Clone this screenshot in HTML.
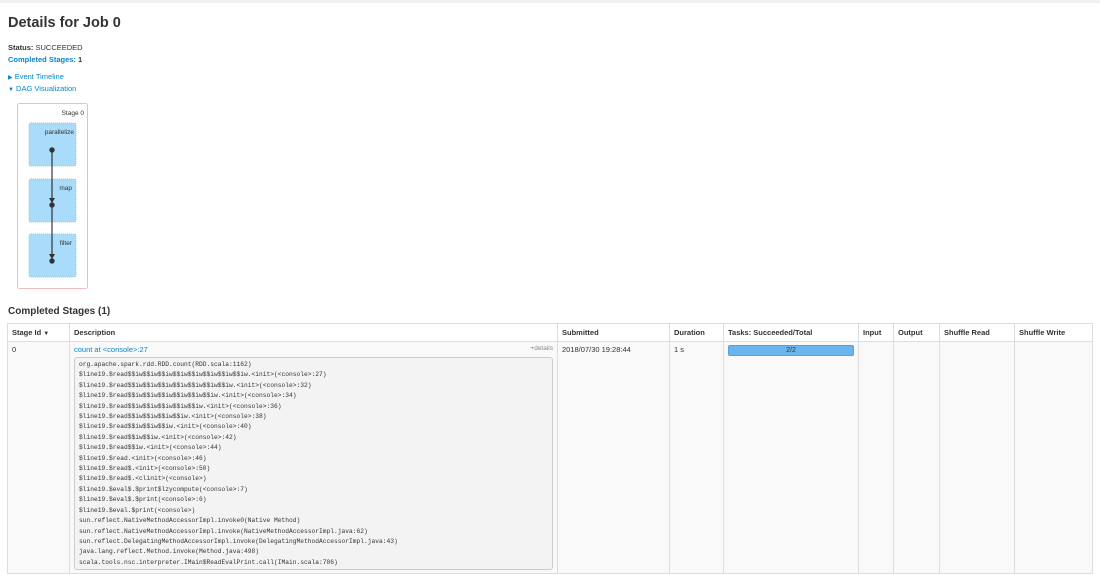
<!DOCTYPE html>
<html><head><style>
*{margin:0;padding:0;box-sizing:border-box}
body{width:1100px;height:575px;background:#fff;font-family:"Liberation Sans",sans-serif;color:#333;position:relative;overflow:hidden}
.a{position:absolute;white-space:nowrap}
a,.lk{color:#0088cc;text-decoration:none}
table{position:absolute;left:7px;top:323px;border-collapse:collapse;font-size:7.5px;width:1086px;table-layout:fixed}
td,th{border:1px solid #ddd;text-align:left;vertical-align:top;padding:3px 4px}
th{height:17px;font-weight:bold;background:#fff;padding:4px}
tr.r td{background:#f9f9f9;height:231px}
pre{font-family:"Liberation Mono",monospace;font-size:6.26px;line-height:10.4px;color:#333;background:#f3f3f3;border:1px solid #ccc;border-radius:3px;padding:2px 4px 0;margin-top:3px;height:213px;overflow:hidden}
</style></head><body>
<div class="a" style="left:0;top:0;width:1100px;height:3px;background:#f0f0f0"></div>
<div class="a" style="left:8px;top:15px;font-size:14.5px;font-weight:bold;color:#333">Details for Job 0</div>
<div class="a" style="left:8px;top:43px;font-size:7.5px"><b>Status:</b> SUCCEEDED</div>
<div class="a lk" style="left:8px;top:55px;font-size:7.5px"><b>Completed Stages:</b> <span style="color:#333"><b>1</b></span></div>
<div class="a lk" style="left:8px;top:72px;font-size:7.5px"><span style="font-size:6px">&#9654;</span> Event Timeline</div>
<div class="a lk" style="left:8px;top:84px;font-size:7.5px"><span style="font-size:6px">&#9660;</span> DAG Visualization</div>
<svg class="a" style="left:0;top:0" width="100" height="300">
<rect x="17.5" y="103.5" width="70" height="185" fill="#fff" stroke="#f0bcc0" rx="2"/>
<text x="84" y="115" font-size="6.5" text-anchor="end" font-family="Liberation Sans" fill="#333">Stage 0</text>
<rect x="29" y="123" width="47" height="43" fill="#a8dcfa" stroke="#9cc" stroke-dasharray="1,1" rx="2"/>
<rect x="29" y="179" width="47" height="43" fill="#a8dcfa" stroke="#9cc" stroke-dasharray="1,1" rx="2"/>
<rect x="29" y="234" width="47" height="43" fill="#a8dcfa" stroke="#9cc" stroke-dasharray="1,1" rx="2"/>
<g font-size="6.5" font-family="Liberation Sans" fill="#333" text-anchor="end"><text x="74" y="134">parallelize</text><text x="72" y="190">map</text><text x="72" y="245">filter</text></g>
<line x1="52" y1="150" x2="52" y2="261" stroke="#333" stroke-width="1.2"/>
<circle cx="52" cy="150" r="2.7" fill="#333"/><circle cx="52" cy="205" r="2.7" fill="#333"/><circle cx="52" cy="261" r="2.7" fill="#333"/>
<path d="M49 198L55 198L52 203Z M49 254L55 254L52 259Z" fill="#333"/>
</svg>
<div class="a" style="left:8px;top:306px;font-size:10px;font-weight:bold">Completed Stages (1)</div>
<table>
<colgroup><col style="width:62px"><col style="width:488px"><col style="width:112px"><col style="width:54px"><col style="width:135px"><col style="width:35px"><col style="width:46px"><col style="width:75px"><col></colgroup>
<tr><th>Stage Id <span style="font-size:6px">&#9660;</span></th><th>Description</th><th>Submitted</th><th>Duration</th><th>Tasks: Succeeded/Total</th><th>Input</th><th>Output</th><th>Shuffle Read</th><th>Shuffle Write</th></tr>
<tr class="r"><td>0</td><td><span class="lk">count at &lt;console&gt;:27</span><span style="float:right;color:#888;font-size:6.5px">+details</span>
<pre>org.apache.spark.rdd.RDD.count(RDD.scala:1162)
$line19.$read$$iw$$iw$$iw$$iw$$iw$$iw$$iw$$iw.&lt;init&gt;(&lt;console&gt;:27)
$line19.$read$$iw$$iw$$iw$$iw$$iw$$iw$$iw.&lt;init&gt;(&lt;console&gt;:32)
$line19.$read$$iw$$iw$$iw$$iw$$iw$$iw.&lt;init&gt;(&lt;console&gt;:34)
$line19.$read$$iw$$iw$$iw$$iw$$iw.&lt;init&gt;(&lt;console&gt;:36)
$line19.$read$$iw$$iw$$iw$$iw.&lt;init&gt;(&lt;console&gt;:38)
$line19.$read$$iw$$iw$$iw.&lt;init&gt;(&lt;console&gt;:40)
$line19.$read$$iw$$iw.&lt;init&gt;(&lt;console&gt;:42)
$line19.$read$$iw.&lt;init&gt;(&lt;console&gt;:44)
$line19.$read.&lt;init&gt;(&lt;console&gt;:46)
$line19.$read$.&lt;init&gt;(&lt;console&gt;:50)
$line19.$read$.&lt;clinit&gt;(&lt;console&gt;)
$line19.$eval$.$print$lzycompute(&lt;console&gt;:7)
$line19.$eval$.$print(&lt;console&gt;:6)
$line19.$eval.$print(&lt;console&gt;)
sun.reflect.NativeMethodAccessorImpl.invoke0(Native Method)
sun.reflect.NativeMethodAccessorImpl.invoke(NativeMethodAccessorImpl.java:62)
sun.reflect.DelegatingMethodAccessorImpl.invoke(DelegatingMethodAccessorImpl.java:43)
java.lang.reflect.Method.invoke(Method.java:498)
scala.tools.nsc.interpreter.IMain$ReadEvalPrint.call(IMain.scala:786)</pre></td>
<td>2018/07/30 19:28:44</td><td>1 s</td><td><div style="background:#6bb5ee;border:1px solid #5aa0d8;border-radius:2px;height:11px;text-align:center;line-height:10px;font-size:7px;color:#333">2/2</div></td><td></td><td></td><td></td><td></td></tr>
</table>
</body></html>
